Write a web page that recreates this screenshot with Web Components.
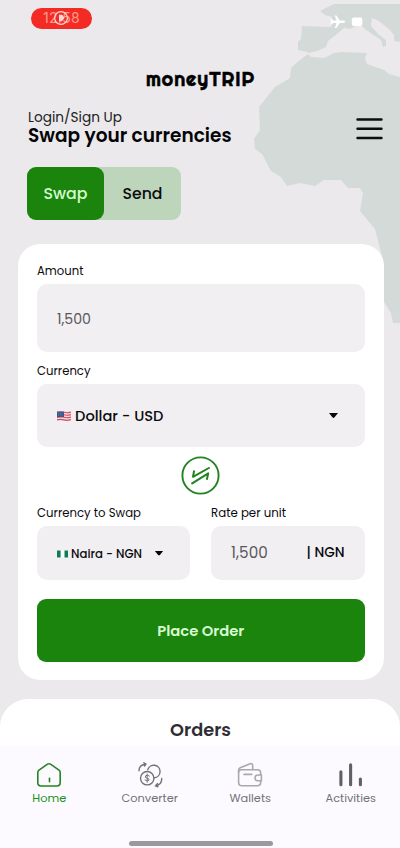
<!DOCTYPE html>
<html lang="en">
<head>
<meta charset="utf-8">
<title>moneyTRIP</title>
<style>
html, body { margin: 0; height: 848px; overflow: hidden; background: #ebe9ec; }
body { font-family: Poppins, Inter, "Open Sans", sans-serif; font-feature-settings: "cv11"; color: #0b0b0e; }
</style>
</head>
<body>
<money-app></money-app>
<script>
const define = (name, html, setup) => customElements.define(name, class extends HTMLElement {
  constructor() {
    super();
    const t = document.createElement('template');
    t.innerHTML = html;
    this.attachShadow({ mode: 'open' }).append(t.content.cloneNode(true));
  }
  connectedCallback() { if (setup) setup(this); }
});

// A line of text scaled to the requested width, with tracking taking up the remainder.
define('ui-text', `
<style>
:host { display: block; flex: none; white-space: nowrap; }
span { display: inline-block; white-space: pre; }
</style><span><slot></slot></span>`, el => {
  const span = el.shadowRoot.querySelector('span');
  const size = +el.getAttribute('size'), line = +(el.getAttribute('line') || 20);
  const measure = () => span.getBoundingClientRect().width;
  el.style.fontSize = size + 'px';
  el.style.lineHeight = line + 'px';
  el.style.height = line + 'px';
  el.style.fontWeight = el.getAttribute('weight') || 400;
  const width = +el.getAttribute('width');
  el.style.width = width + 'px';
  if (!el.hasAttribute('fixed')) {
    const k = Math.min(1.07, Math.max(0.93, width / measure()));
    el.style.fontSize = size * k + 'px';
  }
  span.style.letterSpacing = (width - measure()) / el.textContent.length + 'px';
});

define('status-bar', `
<style>
:host { display: flex; height: 36px; padding: 7.5px 36px 0 31px; box-sizing: border-box; justify-content: space-between; color: #fff; }
.pill { width: 61px; height: 21px; border-radius: 11px; background: #f32b24; display: grid; place-items: center; }
.pill > * { grid-area: 1 / 1; }
ui-text { color: #ff9a8b; font-family: Inter, sans-serif; }
.right { display: flex; gap: 5px; padding-top: 5px; }
.right svg:first-child { margin-left: 2px; }
</style>
<div class="pill">
  <ui-text fixed size="14" width="37" line="20">12:58</ui-text>
  <svg width="16" height="16" viewBox="0 0 16 16" fill="none" stroke="#ffd9d0" stroke-width="1.2"><circle cx="7" cy="8" r="6.4"/><path d="M5 4.8h3.3L10.5 8 8 11.3H5z" fill="#ffd9d0" stroke="none"/></svg>
</div>
<div class="right">
  <svg width="16" height="17" viewBox="0 0 16 17"><path fill="#fff" d="M15 8.7c0 .8-.7 1.2-1.5 1.2H9.7L6.5 15H4.8l1.7-5.1H3L1.7 11.6H.4L1.2 8.7.4 5.8h1.3L3 7.5h3.5L4.8 2.4h1.7l3.2 5.1h3.8c.8 0 1.5.4 1.5 1.2z"/></svg>
  <svg width="12" height="17" viewBox="0 0 12 17" style="margin-right:1px"><rect x=".8" y="4.5" width="10.5" height="8.6" rx="2" fill="#fff"/></svg>
</div>`);

define('world-map', `
<style>:host { display: block; } svg { display: block; }</style>
<svg width="400" height="330" viewBox="0 0 400 330">
<g fill="#d3dad8">
<path d="M400 4H334L326 8 320 11 325 15 332 17 331 27 302 26 301 39 298 42 298 50 307 52 309 53 317 51 326 47 328 41 337 34 344 28 350 29 360 24 365 29 375 36 381 40 383 47 386 46 386 40 378 34 371 26 372 18 379 21 390 30 394 35 394 41 400 42z"/>
<path d="M308 54 300 60 291 68 290 78 275 87 259 107 260 130 254 139 255 149 262 154 271 171 281 177 287 186 300 183 315 186 324 180 341 180 348 188 360 188 363 193 360 211 375 229 383 260 384 302 391 313 393 323 400 323V77L389 74 384 70 367 64 365 58 367 53 342 52 334 53 324 58 311 57z"/>
</g></svg>`);

define('menu-button', `
<style>:host { display: block; } svg { display: block; }</style>
<svg width="28" height="24" viewBox="0 0 28 24" stroke="#07100e" stroke-width="2.4" stroke-linecap="round"><path d="M1.5 2.5H25.5M1.5 11.7H25.5M1.5 21H25.5"/></svg>`);

define('page-header', `
<style>
:host { display: block; }
.logo { display: flex; justify-content: center; height: 30px; margin: 28px 0 0 1px; color: #000; font-family: "Righteous", Inter, sans-serif; -webkit-text-stroke: .45px #000; }
.row { display: flex; justify-content: space-between; align-items: flex-start; padding: 14px 16px 0 28px; height: 45px; }
.titles { color: #222; padding-top: 1px; }
.titles ui-text + ui-text { color: #050507; }
menu-button { margin-top: 9px; }
</style>
<div class="logo"><ui-text fixed size="19.5" width="109" line="30">moneyTRIP</ui-text></div>
<div class="row">
  <div class="titles">
    <ui-text size="13.7" width="94" line="18">Login/Sign Up</ui-text>
    <ui-text size="18" weight="600" width="203.5" line="18">Swap your currencies</ui-text>
  </div>
  <menu-button></menu-button>
</div>`);

define('mode-switch', `
<style>
:host { display: flex; width: 154px; height: 53px; margin: 14px 0 0 27px; border-radius: 9px; background: #bdd5ba; }
div { flex: 1; display: grid; place-items: center; box-sizing: border-box; padding-top: 1px; }
.on { background: #1b840d; color: #d6fbcf; border-radius: 9px; }
</style>
<div class="on"><ui-text size="16" weight="500" width="44">Swap</ui-text></div>
<div><ui-text size="16" weight="500" width="40">Send</ui-text></div>`);

define('drop-caret', `
<style>:host { display: block; width: 9px; height: 5px; background: #07070a; clip-path: polygon(0 0, 100% 0, 62% 85%, 50% 100%, 38% 85%); }</style>`);

define('country-flag', `
<style>:host { display: block; } svg { display: none; } :host([code=us]) .us, :host([code=ng]) .ng { display: block; }</style>
<svg class="us" width="14" height="10" viewBox="0 0 14 10"><rect y=".5" width="14" height="9" rx=".6" fill="#f0dfe4"/><path d="M0 1.3Q4 .3 7 1.3T14 1M0 3.8Q4 2.8 7 3.8T14 3.5M0 6.3Q4 5.3 7 6.3T14 6M0 8.9Q4 8 7 8.9T14 8.6" stroke="#d64a5b" stroke-width="1.2" fill="none"/><path d="M0 .6H7V6H0z" fill="#365a8b"/><path d="M1 2h5M1 4h5" stroke="#8da3c0" stroke-width=".6" stroke-dasharray=".8 1"/></svg>
<svg class="ng" width="11" height="8" viewBox="0 0 11 8"><path d="M0 .5h11v7H0z" fill="#f8fffb"/><path d="M0 .5h3.6v7H0zM7.5.5H11v7H7.5z" fill="#14795a"/></svg>`);

define('form-field', `
<style>
:host { display: block; }
.box { display: flex; align-items: center; box-sizing: border-box; height: var(--h, 54px); margin-top: 3px; padding: 0 20px; border-radius: 10px; background: #f1eff2; }
</style>
<slot name="label"></slot>
<div class="box"><slot></slot></div>`);

define('swap-badge', `
<style>:host { display: block; height: 39px; } svg { display: block; margin-left: 143.5px; }</style>
<svg width="39" height="39" viewBox="0 0 39 39" fill="none" stroke="#218321" stroke-width="2" stroke-linejoin="round"><circle cx="19.5" cy="19.5" r="18.1" stroke-width="1.9"/><path d="M28.7 11.5 12 20.8 13.2 14.5M10.4 27.8 27.2 17.4 25.8 23.8"/></svg>`);

define('swap-form', `
<style>
:host { display: block; box-sizing: border-box; width: 365.5px; height: 436.5px; margin: 23.5px 0 0 18px; padding: 17.5px 19px 0; border-radius: 22px; background: #fff; }
.pair { display: grid; grid-template-columns: 153px 153.5px; justify-content: space-between; margin-top: 8px; }
.currency { margin-top: 9px; }
swap-badge { margin-top: 9px; }
.muted { color: #59575c; }
.us { margin-right: 4px; }
.push { margin-left: auto; }
.button { display: grid; place-items: center; height: 63px; margin-top: 19px; border-radius: 9px; background: #1b840d; color: #d9fbd3; }
</style>
<form-field style="--h:68px"><ui-text slot="label" size="12" width="46.5">Amount</ui-text><ui-text class="muted" size="13.3" width="34" style="margin-top:2px">1,500</ui-text></form-field>
<form-field class="currency" style="--h:63px"><ui-text slot="label" size="12" width="53.5">Currency</ui-text><country-flag class="us" code="us"></country-flag><ui-text size="14.4" weight="500" width="88.5">Dollar - USD</ui-text><drop-caret class="push" style="margin-right:6.5px"></drop-caret></form-field>
<swap-badge></swap-badge>
<div class="pair">
  <form-field><ui-text slot="label" size="12" width="104">Currency to Swap</ui-text><country-flag code="ng" style="margin:2px 3px 0 0"></country-flag><ui-text size="11.3" weight="500" width="71" style="margin-top:2px">Naira - NGN</ui-text><drop-caret style="margin-left:12.5px"></drop-caret></form-field>
  <form-field><ui-text slot="label" size="12" width="75">Rate per unit</ui-text><ui-text class="muted" size="14.2" width="37">1,500</ui-text><ui-text class="push" size="13.2" weight="500" width="38">| NGN</ui-text></form-field>
</div>
<div class="button"><ui-text size="14.2" weight="600" width="87">Place Order</ui-text></div>`);

define('orders-sheet', `
<style>
:host { display: flex; justify-content: center; box-sizing: border-box; height: 47px; margin-top: 19px; padding: 21px 0 0 1px; border-radius: 28px 28px 0 0; background: #fff; color: #302e35; }
</style>
<ui-text size="17.5" weight="600" width="61">Orders</ui-text>`);

define('nav-item', `
<style>
:host { display: flex; flex-direction: column; align-items: center; color: #737177; }
::slotted(svg) { display: block; width: 28px; height: 28px; fill: none; stroke-linecap: round; stroke-linejoin: round; }
.t { margin-top: -1px; }
</style>
<slot name="icon"></slot><div class="t"><slot></slot></div>`);

define('bottom-nav', `
<style>
:host { display: block; height: 102px; box-sizing: border-box; padding-top: 15px; background: #fcfafe; }
.items { display: grid; grid-template-columns: repeat(4, 100.5px); margin-left: -1px; height: 80px; }
.bar { width: 144px; height: 4.5px; border-radius: 3px; background: #9b999d; margin-left: 128.5px; }
</style>
<div class="items">
  <nav-item style="color:#21911a"><svg slot="icon" viewBox="0 0 28 28" stroke="#21861f" stroke-width="1.6"><path d="M4 9.1 12.5 3.2Q14 2.2 15.5 3.2L24 9.1Q25.2 10 25.2 11.5V21.5Q25.2 25 21.8 25H6.2Q2.8 25 2.8 21.5V11.5Q2.8 10 4 9.1z"/><path d="M14.5 17.3V20.8"/></svg><ui-text size="11.5" width="34">Home</ui-text></nav-item>
  <nav-item><svg slot="icon" viewBox="0 0 28 28" stroke="#747277" stroke-width="1.4"><circle cx="11.2" cy="17.2" r="6.7"/><path d="M11.7 8.8A6.3 6.3 0 1 1 18.3 16.8"/><path d="M3 9.8Q3 4 9.2 3.2M7.8 1.8 10 3.1 8.5 5M25.7 17.5Q26 23.4 19.9 24.8M21.4 22.6 19.4 24.9 22 25.8"/><path d="M13.4 15Q11.2 13.5 9.6 14.8 8.4 16.8 11.1 17.2 14.2 17.8 12.8 19.4 11 20.5 9 19M11.2 13V21.3" stroke-width="1"/></svg><ui-text size="11.5" width="56.5">Converter</ui-text></nav-item>
  <nav-item><svg slot="icon" viewBox="0 0 28 28" stroke="#aaa8ac" stroke-width="1.6"><path d="M24.7 14V12.3Q24.7 8.7 21.2 8.7H5.5Q2.6 8.7 2.6 11.3V21.2Q2.6 24.8 6.2 24.8H21.2Q24.7 24.8 24.7 21.3V19.8"/><path d="M2.6 11.3V9Q2.7 7.5 4.2 6.8L14.2 2.8Q16.5 2 16.7 4.4V8.5M8 13.4H15.8"/><path d="M25.4 14H21.5Q19 14.3 19 16.9T21.5 19.7H25.4z"/></svg><ui-text size="11.5" width="41.5">Wallets</ui-text></nav-item>
  <nav-item><svg slot="icon" viewBox="0 0 28 28" stroke="#626066" stroke-width="3.1"><path d="M3.9 10.7V23.8M13.6 3.8V23.8M23.4 18V23.8"/></svg><ui-text size="11.5" width="50.5">Activities</ui-text></nav-item>
</div>
<div class="bar"></div>`);

define('money-app', `
<style>
:host { display: block; position: relative; width: 400px; height: 848px; overflow: hidden; background: #ebe9ec; }
world-map { position: absolute; inset: 0; }
main { position: relative; }
</style>
<world-map></world-map>
<main>
<status-bar></status-bar>
<page-header></page-header>
<mode-switch></mode-switch>
<swap-form></swap-form>
<orders-sheet></orders-sheet>
<bottom-nav></bottom-nav>
</main>`);
</script>
</body>
</html>
